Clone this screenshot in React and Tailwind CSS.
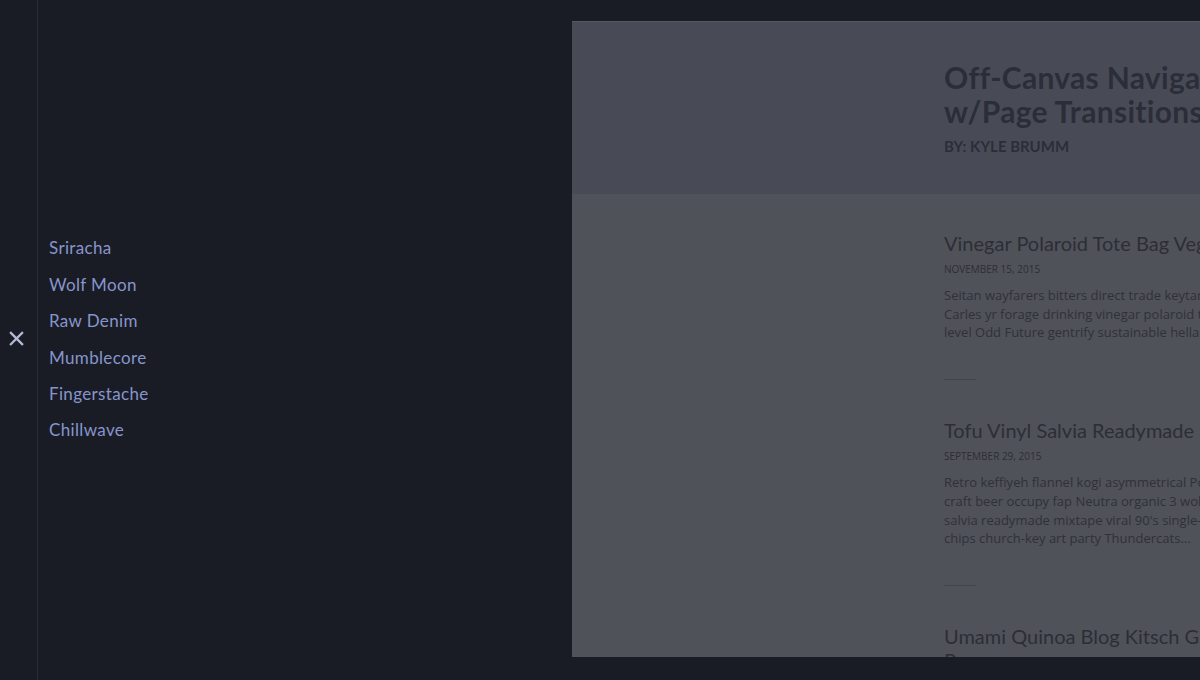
import React from "react";

const navItems = ["Sriracha", "Wolf Moon", "Raw Denim", "Mumblecore", "Fingerstache", "Chillwave"];

const posts = [
  {
    title: ["Vinegar Polaroid Tote Bag Vegan Kale Chips"],
    date: "November 15, 2015",
    lines: [
      "Seitan wayfarers bitters direct trade keytar Austin mumblecore,",
      "Carles yr forage drinking vinegar polaroid tote bag before they sold out",
      "level Odd Future gentrify sustainable hella.",
    ],
  },
  {
    title: ["Tofu Vinyl Salvia Readymade Photo Booth"],
    date: "September 29, 2015",
    lines: [
      "Retro keffiyeh flannel kogi asymmetrical Portland locavore banjo,",
      "craft beer occupy fap Neutra organic 3 wolf moon lomo cred next",
      "salvia readymade mixtape viral 90's single-origin coffee kale",
      "chips church-key art party Thundercats...",
    ],
  },
  {
    title: ["Umami Quinoa Blog Kitsch Gluten-Free Small Batch", "Pug"],
    date: "August 12, 2015",
    lines: [],
  },
];

const heading = { fontFamily: "Lato, 'Open Sans', sans-serif" };
const body = { fontFamily: "'Open Sans', 'Liberation Sans', sans-serif" };

const App = () => {
  return (
    <div className="w-[1200px] h-[680px] overflow-hidden bg-[#1a1c25] flex">
      {/* Rail with close button */}
      <div className="w-[38px] h-full border-r border-[#2a2d38] flex items-center justify-center pr-[4px] flex-shrink-0">
        <svg width="15" height="15" viewBox="0 0 16 16" className="mt-[-4px]">
          <path d="M2 2 L14 14 M14 2 L2 14" stroke="#b3bad6" strokeWidth="2.4" strokeLinecap="square" />
        </svg>
      </div>

      {/* Nav */}
      <div className="w-[534px] flex-shrink-0 pl-[11px] pt-[230px]" style={heading}>
        {navItems.map((item) => (
          <div key={item} className="h-[36.4px] flex items-center text-[17px] tracking-[0.35px] text-[#8795cc]">
            {item}
          </div>
        ))}
      </div>

      {/* Page panel */}
      <div className="flex-1 mt-[21px] h-[636px] overflow-hidden bg-[#505259] border-t border-[#555862]">
        <div className="bg-[#484b56] h-[172px] pl-[372px] pt-[38px]">
          <h1 className="text-[30px] leading-[34px] font-bold tracking-[0.3px] text-[#2b2e38] whitespace-nowrap" style={heading}>
            Off-Canvas Navigation
            <br />
            w/Page Transitions
          </h1>
          <p className="mt-[8px] text-[15px] leading-[20px] font-bold text-[#2b2e38] uppercase" style={heading}>
            By: Kyle Brumm
          </p>
        </div>

        <div className="pl-[372px] pt-[37px]">
          {posts.map((post, i) => (
            <div key={i}>
              <h2 className="text-[20px] leading-[24px] font-normal text-[#2c2e36] whitespace-nowrap" style={heading}>
                {post.title.map((t) => (
                  <div key={t}>{t}</div>
                ))}
              </h2>
              {post.lines.length > 0 && (
                <>
                  <p className="mt-[7px] text-[10px] leading-[14px] font-medium uppercase text-[#2c2e36]" style={body}>
                    {post.date}
                  </p>
                  <div className="mt-[10px] text-[13px] leading-[18.7px] text-[#2f3138] whitespace-nowrap" style={body}>
                    {post.lines.map((l) => (
                      <div key={l}>{l}</div>
                    ))}
                  </div>
                  <div className="mt-[37px] mb-[38px] w-[32px] h-px bg-[#42444b]"></div>
                </>
              )}
            </div>
          ))}
        </div>
      </div>
    </div>
  );
};

export default App;
